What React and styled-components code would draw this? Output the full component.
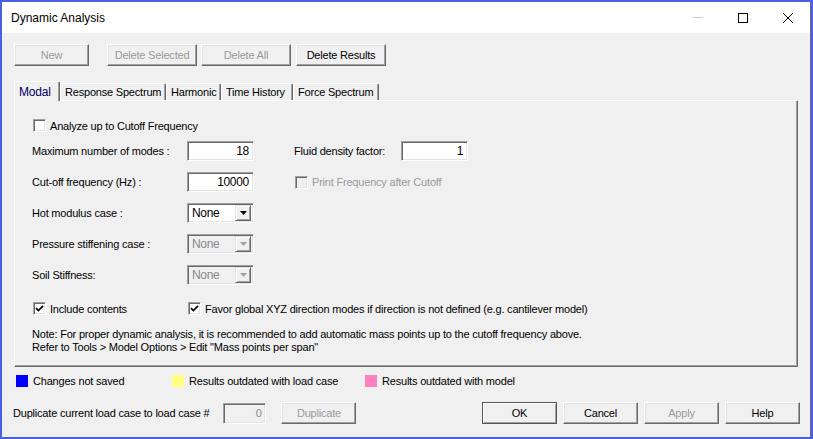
import React from 'react';
import styled, { createGlobalStyle } from 'styled-components';

const Global = createGlobalStyle`
  html, body { margin: 0; padding: 0; }
  body {
    background: #4a5fe6;
    font-family: "Liberation Sans", Arial, sans-serif;
    width: 813px;
    height: 439px;
    overflow: hidden;
  }
`;

const Window = styled.div`
  margin: 2px 0 0 2px;
  width: 808px;
  height: 435px;
  background: #f0f0f0;
  border-right: 1px solid #6d6d7a;
  display: flex;
  flex-direction: column;
  font-size: 11px;
  letter-spacing: -0.2px;
  color: #000;
`;

const TitleBar = styled.div`
  height: 31px;
  background: #fff;
  display: flex;
  align-items: center;
  padding-left: 9px;
  font-size: 12px;
  letter-spacing: 0;
`;

const TitleText = styled.div`
  flex: 1;
`;

const WinBtn = styled.div`
  width: 45px;
  height: 31px;
  display: flex;
  align-items: center;
  justify-content: center;
`;

const Body = styled.div`
  padding: 11px 12px 0 12px;
  display: flex;
  flex-direction: column;
`;

const Toolbar = styled.div`
  display: flex;
  height: 22px;
`;

const Btn = styled.button`
  width: ${p => p.$w}px;
  height: 22px;
  margin-left: ${p => p.$ml || 0}px;
  box-sizing: border-box;
  background: #f0f0f0;
  border: 1px solid;
  border-color: ${p => (p.$default ? '#555' : '#fff #696969 #696969 #fff')};
  box-shadow: ${p =>
    p.$default
      ? 'inset 1px 1px #fff, inset -1px -1px #a0a0a0'
      : 'inset -1px -1px #a0a0a0, inset 1px 1px #e3e3e3'};
  font: inherit;
  font-size: 11px;
  letter-spacing: inherit;
  color: ${p => (p.disabled ? '#9a9a9a' : '#000')};
  padding: 0;
  cursor: default;
`;

const TabRow = styled.div`
  display: flex;
  align-items: flex-end;
  height: 19px;
  margin-top: 15px;
  position: relative;
  z-index: 1;
`;

const Tab = styled.div`
  width: ${p => p.$w}px;
  height: ${p => (p.$active ? 20 : 17)}px;
  margin-bottom: ${p => (p.$active ? -1 : 0)}px;
  box-sizing: border-box;
  background: #f0f0f0;
  border-top: 1px solid #fff;
  border-left: 1px solid #fff;
  border-right: 1px solid #696969;
  box-shadow: inset -1px 0 #a0a0a0;
  border-radius: 2px 2px 0 0;
  padding: ${p => (p.$active ? '3px 0 0 4px' : '2px 0 0 4px')};
  white-space: nowrap;
  color: ${p => (p.$active ? '#000060' : '#000')};
  font-size: ${p => (p.$active ? '12px' : '11px')};
`;

const Panel = styled.div`
  height: 267px;
  box-sizing: border-box;
  border: 1px solid;
  border-color: #fff #696969 #696969 #fff;
  box-shadow: inset -1px -1px #a0a0a0;
  padding: 18px 0 0 18px;
  display: flex;
  flex-direction: column;
`;

const CheckLine = styled.label`
  display: flex;
  align-items: center;
  height: 13px;
  gap: 4px;
  color: ${p => (p.$disabled ? '#9a9a9a' : '#000')};
  white-space: nowrap;
`;

const Box = styled.span`
  width: 13px;
  height: 13px;
  box-sizing: border-box;
  border: 1px solid;
  border-color: #a0a0a0 #fff #fff #a0a0a0;
  box-shadow: inset 1px 1px #696969, inset -1px -1px #e3e3e3;
  background: ${p => (p.$disabled ? '#f0f0f0' : '#fff')};
  display: flex;
  align-items: center;
  justify-content: center;
  flex: none;
`;

const FormGrid = styled.div`
  display: grid;
  grid-template-columns: 154px 67px 41px 106px 67px;
  grid-auto-rows: 20px;
  row-gap: 11px;
  margin-top: 9px;
  align-items: center;
`;

const Label = styled.div`
  margin-left: -1px;
  white-space: nowrap;
`;

const Sunken = styled.div`
  height: 20px;
  box-sizing: border-box;
  border: 1px solid;
  border-color: #a0a0a0 #fff #fff #a0a0a0;
  box-shadow: inset 1px 1px #696969, inset -1px -1px #e3e3e3;
  background: ${p => (p.$disabled ? '#f0f0f0' : '#fff')};
  color: ${p => (p.$disabled ? '#8a8a8a' : '#000')};
  display: flex;
  align-items: center;
  font-size: 12px;
  letter-spacing: -0.3px;
`;

const NumInput = styled(Sunken)`
  justify-content: flex-end;
  padding-right: 4px;
`;

const SelectBox = styled(Sunken)`
  padding: 2px;
  justify-content: space-between;
`;

const SelectText = styled.span`
  padding-left: 2px;
`;

const ArrowBtn = styled.span`
  width: 16px;
  height: 16px;
  box-sizing: border-box;
  background: #f0f0f0;
  border: 1px solid;
  border-color: #e3e3e3 #696969 #696969 #e3e3e3;
  box-shadow: inset 1px 1px #fff, inset -1px -1px #a0a0a0;
  display: flex;
  align-items: center;
  justify-content: center;
`;

const SpanCell = styled.div`
  grid-column: span 2;
`;

const CheckRow = styled.div`
  display: flex;
  margin-top: 17px;
`;

const CheckSlot = styled.div`
  width: ${p => (p.$w ? `${p.$w}px` : 'auto')};
`;

const Note = styled.div`
  margin-top: 13px;
  margin-left: -1px;
  line-height: 13px;
`;

const Legend = styled.div`
  display: flex;
  margin-top: 8px;
  height: 12px;
  align-items: center;
`;

const LegendItem = styled.div`
  width: ${p => (p.$w ? `${p.$w}px` : 'auto')};
  display: flex;
  align-items: center;
  gap: 5px;
  margin-left: ${p => p.$ml || 0}px;
`;

const Swatch = styled.span`
  width: 12px;
  height: 12px;
  background: ${p => p.$c};
  flex: none;
`;

const BottomRow = styled.div`
  display: flex;
  align-items: center;
  margin-top: 15px;
  margin-right: -2px;
  height: 22px;
`;

const DupInput = styled(NumInput)`
  width: 43px;
  height: 21px;
  margin-left: 14px;
  font-size: 11px;
  color: #8a8a8a;
`;

const Spacer = styled.div`
  flex: 1;
`;

const Check = ({ checked, disabled }) => (
  <Box $disabled={disabled}>
    {checked && (
      <svg width="9" height="9" viewBox="0 0 9 9">
        <path d="M1 4.2 L3.4 6.6 L8 1.8" fill="none" stroke="#000" strokeWidth="1.7" />
      </svg>
    )}
  </Box>
);

const Arrow = ({ disabled }) => (
  <svg width="7" height="4" viewBox="0 0 7 4">
    <path d="M0 0 H7 L3.5 4 Z" fill={disabled ? '#a0a0a0' : '#000'} />
  </svg>
);

const Select = ({ disabled }) => (
  <SelectBox $disabled={disabled}>
    <SelectText>None</SelectText>
    <ArrowBtn>
      <Arrow disabled={disabled} />
    </ArrowBtn>
  </SelectBox>
);

const tabs = [
  { label: 'Modal', w: 46, active: true },
  { label: 'Response Spectrum', w: 106 },
  { label: 'Harmonic', w: 55 },
  { label: 'Time History', w: 72 },
  { label: 'Force Spectrum', w: 86 },
];

export default function App() {
  return (
    <>
      <Global />
      <Window>
        <TitleBar>
          <TitleText>Dynamic Analysis</TitleText>
          <WinBtn>
            <svg width="10" height="1" viewBox="0 0 10 1">
              <rect width="10" height="1" fill="#c8c8c8" />
            </svg>
          </WinBtn>
          <WinBtn>
            <svg width="10" height="10" viewBox="0 0 10 10">
              <rect x="0.5" y="0.5" width="9" height="9" fill="none" stroke="#000" />
            </svg>
          </WinBtn>
          <WinBtn>
            <svg width="10" height="10" viewBox="0 0 10 10">
              <path d="M0 0 L10 10 M10 0 L0 10" stroke="#000" strokeWidth="1" />
            </svg>
          </WinBtn>
        </TitleBar>
        <Body>
          <Toolbar>
            <Btn $w={75} disabled>New</Btn>
            <Btn $w={90} $ml={18} disabled>Delete Selected</Btn>
            <Btn $w={90} $ml={4} disabled>Delete All</Btn>
            <Btn $w={90} $ml={5}>Delete Results</Btn>
          </Toolbar>
          <TabRow>
            {tabs.map(t => (
              <Tab key={t.label} $w={t.w} $active={t.active}>{t.label}</Tab>
            ))}
          </TabRow>
          <Panel>
            <CheckLine>
              <Check />
              Analyze up to Cutoff Frequency
            </CheckLine>
            <FormGrid>
              <Label>Maximum number of modes :</Label>
              <NumInput>18</NumInput>
              <div />
              <Label>Fluid density factor:</Label>
              <NumInput>1</NumInput>

              <Label>Cut-off frequency (Hz) :</Label>
              <NumInput>10000</NumInput>
              <div />
              <SpanCell>
                <CheckLine $disabled>
                  <Check disabled />
                  Print Frequency after Cutoff
                </CheckLine>
              </SpanCell>

              <Label>Hot modulus case :</Label>
              <Select />
              <div />
              <div />
              <div />

              <Label>Pressure stiffening case :</Label>
              <Select disabled />
              <div />
              <div />
              <div />

              <Label>Soil Stiffness:</Label>
              <Select disabled />
            </FormGrid>
            <CheckRow>
              <CheckSlot $w={155}>
                <CheckLine>
                  <Check checked />
                  Include contents
                </CheckLine>
              </CheckSlot>
              <CheckSlot>
                <CheckLine>
                  <Check checked />
                  Favor global XYZ direction modes if direction is not defined (e.g. cantilever model)
                </CheckLine>
              </CheckSlot>
            </CheckRow>
            <Note>
              Note: For proper dynamic analysis, it is recommended to add automatic mass points up to the cutoff frequency above.
              <br />
              Refer to Tools &gt; Model Options &gt; Edit "Mass points per span"
            </Note>
          </Panel>
          <Legend>
            <LegendItem $w={156} $ml={2}>
              <Swatch $c="#0000ff" />
              Changes not saved
            </LegendItem>
            <LegendItem $w={193}>
              <Swatch $c="#ffff80" />
              Results outdated with load case
            </LegendItem>
            <LegendItem>
              <Swatch $c="#ff80c0" />
              Results outdated with model
            </LegendItem>
          </Legend>
          <BottomRow>
            <Label>Duplicate current load case to load case #</Label>
            <DupInput $disabled>0</DupInput>
            <Btn $w={75} $ml={15} disabled>Duplicate</Btn>
            <Spacer />
            <Btn $w={75} $default>OK</Btn>
            <Btn $w={75} $ml={6}>Cancel</Btn>
            <Btn $w={75} $ml={6} disabled>Apply</Btn>
            <Btn $w={75} $ml={6}>Help</Btn>
          </BottomRow>
        </Body>
      </Window>
    </>
  );
}
